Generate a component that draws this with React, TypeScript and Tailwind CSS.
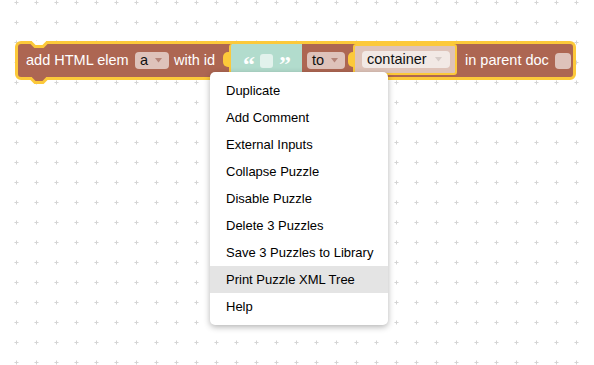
import React from 'react';

const menuItems = [
  'Duplicate',
  'Add Comment',
  'External Inputs',
  'Collapse Puzzle',
  'Disable Puzzle',
  'Delete 3 Puzzles',
  'Save 3 Puzzles to Library',
  'Print Puzzle XML Tree',
  'Help',
];

const Arrow: React.FC<{ color: string }> = ({ color }) => (
  <svg width="7" height="5" viewBox="0 0 7 5">
    <path d="M0 0H7L3.5 4.5Z" fill={color} />
  </svg>
);

const Grid: React.FC = () => (
  <svg className="absolute inset-0" width="594" height="365">
    <defs>
      <pattern id="grid" width="20" height="20" patternUnits="userSpaceOnUse">
        <path d="M14.5 2.5H18.5M16.5 0.5V4.5" stroke="#d4d4d4" strokeWidth="1" />
      </pattern>
    </defs>
    <rect width="100%" height="100%" fill="url(#grid)" />
  </svg>
);

// notch on the top edge + tab on the bottom edge of the selected block
const Notches: React.FC = () => (
  <>
    <svg className="absolute left-[10px] top-[-3px]" width="22" height="9" viewBox="0 0 22 9">
      <path d="M0 1.5H3L7 5.5H15L19 1.5H22" fill="#ffffff" />
      <rect x="4" y="0" width="14" height="2" fill="#ffffff" />
      <path d="M0 1.5H3L7 5.5H15L19 1.5H22" fill="none" stroke="#fcc93a" strokeWidth="3" />
    </svg>
    <svg className="absolute left-[10px] top-[32px]" width="22" height="10" viewBox="0 0 22 10">
      <path d="M0 2.5H3L7 6.5H15L19 2.5H22" fill="#ad6652" />
      <rect x="4" y="0" width="14" height="4" fill="#ad6652" />
      <path d="M0 2.5H3L7 6.5H15L19 2.5H22" fill="none" stroke="#fcc93a" strokeWidth="3" />
    </svg>
  </>
);

const Block: React.FC = () => (
  <div className="absolute left-[15px] top-[41px] h-[39px] flex items-center border-[3px] border-[#fcc93a] rounded-[6px] bg-[#ad6652] pl-[8px] pr-[2px] text-[14.5px] text-white">
    <Notches />
    <span className="w-[109px] whitespace-nowrap">add HTML elem</span>
    <div className="flex items-center h-[17px] w-[34px] rounded-[4px] bg-[#dec2ba] pl-[5px] text-[#111]">
      <span className="w-[15px]">a</span>
      <Arrow color="#b48478" />
    </div>
    <span className="ml-[5px] w-[49px] whitespace-nowrap">with id</span>

    {/* string block */}
    <div className="relative self-stretch flex">
      <div className="absolute left-[0px] top-[8px] w-[7px] h-[15px] rounded-l-[5px] bg-[#fcc93a]" />
      <div className="ml-[6px] w-[73px] h-full flex items-center border-l-[2px] border-[#fcc93a] rounded-tl-[3px] bg-[#b2dccd] pl-[12px]">
        <span className="w-[17px] mt-[3px] h-[20px] font-['Liberation_Serif',serif] text-[24px] font-bold leading-none text-white">“</span>
        <div className="w-[13px] h-[14px] rounded-[3px] bg-[#e2f2ec]" />
        <span className="ml-[6px] mt-[3px] h-[20px] font-['Liberation_Serif',serif] text-[24px] font-bold leading-none text-white">”</span>
      </div>
    </div>

    <div className="ml-[5px] flex items-center h-[17px] w-[38px] rounded-[4px] bg-[#dec2ba] pl-[5px] text-[#111]">
      <span className="w-[19px]">to</span>
      <Arrow color="#b48478" />
    </div>

    {/* socket */}
    <div className="relative ml-[3px] self-start flex">
      <div className="absolute left-[0px] top-[8px] w-[7px] h-[15px] rounded-l-[5px] bg-[#fcc93a]" />
      <div className="ml-[5px] h-[31px] flex items-center border-[2px] border-[#fcc93a] rounded-[3px] bg-[#dec3b9] pl-[7px] pr-[5px]">
        <div className="flex items-center h-[17px] w-[88px] rounded-[4px] bg-[#f2e9e5] pl-[5px] text-[#111]">
          <span className="w-[68px]">container</span>
          <Arrow color="#d6ccc8" />
        </div>
      </div>
    </div>

    <span className="ml-[8px] w-[90px] whitespace-nowrap">in parent doc</span>
    <div className="w-[16px] h-[16px] rounded-[4px] bg-[#dec2ba]" />
  </div>
);

const Menu: React.FC = () => (
  <div className="absolute left-[210px] top-[72px] w-[178px] rounded-[5px] bg-white py-[5px] shadow-[0_2px_6px_rgba(0,0,0,0.3)]">
    {menuItems.map((item) => (
      <div
        key={item}
        className={`h-[27px] leading-[27px] pl-[16px] text-[13px] text-black ${
          item === 'Print Puzzle XML Tree' ? 'bg-[#e4e4e4]' : ''
        }`}
      >
        {item}
      </div>
    ))}
  </div>
);

export default function App() {
  return (
    <div className="relative w-[594px] h-[365px] overflow-hidden bg-white font-['Liberation_Sans',Arial,sans-serif]">
      <Grid />
      <Block />
      <Menu />
    </div>
  );
}
